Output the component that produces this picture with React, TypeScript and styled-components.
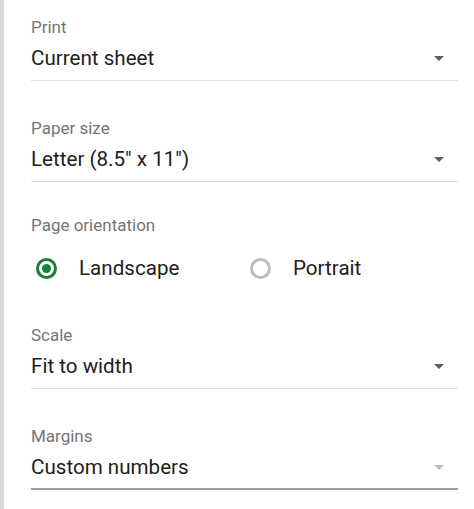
import React from 'react';
import styled, { createGlobalStyle } from 'styled-components';

const GlobalStyle = createGlobalStyle`
  html, body {
    margin: 0;
    padding: 0;
    background: #fff;
  }
  body {
    font-family: Roboto, 'Liberation Sans', Arial, sans-serif;
  }
`;

const Panel = styled.div`
  box-sizing: border-box;
  min-height: 509px;
  border-left: 4px solid #dadada;
  padding: 0 16px 0 27px;
`;

const Field = styled.div`
  padding-top: 17px;
  margin-bottom: 20px;
`;

const Label = styled.div`
  font-size: 17px;
  line-height: 20px;
  color: #757575;
`;

const SelectRow = styled.div<{ $disabled?: boolean }>`
  display: flex;
  align-items: center;
  justify-content: space-between;
  margin-top: 9px;
  padding-bottom: ${(p) => (p.$disabled ? '9px' : '10px')};
  border-bottom: ${(p) => (p.$disabled ? '2px solid #9e9e9e' : '1px solid #e0e0e0')};
  font-size: 20.6px;
  line-height: 24px;
  color: #212121;
`;

const Arrow = styled.span<{ $disabled?: boolean }>`
  width: 0;
  height: 0;
  margin-right: 14px;
  border-left: 5px solid transparent;
  border-right: 5px solid transparent;
  border-top: 5px solid ${(p) => (p.$disabled ? '#bdbdbd' : '#5f5f5f')};
`;

const Orientation = styled.div`
  padding-top: 13px;
  margin-bottom: 28px;
`;

const RadioGroup = styled.div`
  display: grid;
  grid-template-columns: 214px auto;
  margin-top: 21px;
  padding-left: 5px;
`;

const Option = styled.label`
  display: flex;
  align-items: center;
  gap: 22px;
  font-size: 20.6px;
  line-height: 24px;
  color: #212121;
`;

const Radio = styled.span<{ $checked?: boolean }>`
  box-sizing: border-box;
  width: 21px;
  height: 21px;
  border-radius: 50%;
  border: 3px solid ${(p) => (p.$checked ? '#188038' : '#bdbdbd')};
  display: flex;
  align-items: center;
  justify-content: center;
  &::after {
    content: '';
    width: 9px;
    height: 9px;
    border-radius: 50%;
    background: ${(p) => (p.$checked ? '#188038' : 'transparent')};
  }
`;

const SelectField: React.FC<{ label: string; value: string; disabled?: boolean }> = ({
  label,
  value,
  disabled,
}) => (
  <Field>
    <Label>{label}</Label>
    <SelectRow $disabled={disabled}>
      <span>{value}</span>
      <Arrow $disabled={disabled} />
    </SelectRow>
  </Field>
);

export default function App() {
  return (
    <>
      <GlobalStyle />
      <Panel>
        <SelectField label="Print" value="Current sheet" />
        <SelectField label="Paper size" value={'Letter (8.5" x 11")'} />
        <Orientation>
          <Label>Page orientation</Label>
          <RadioGroup>
            <Option>
              <Radio $checked />
              Landscape
            </Option>
            <Option>
              <Radio />
              Portrait
            </Option>
          </RadioGroup>
        </Orientation>
        <SelectField label="Scale" value="Fit to width" />
        <SelectField label="Margins" value="Custom numbers" disabled />
      </Panel>
    </>
  );
}
